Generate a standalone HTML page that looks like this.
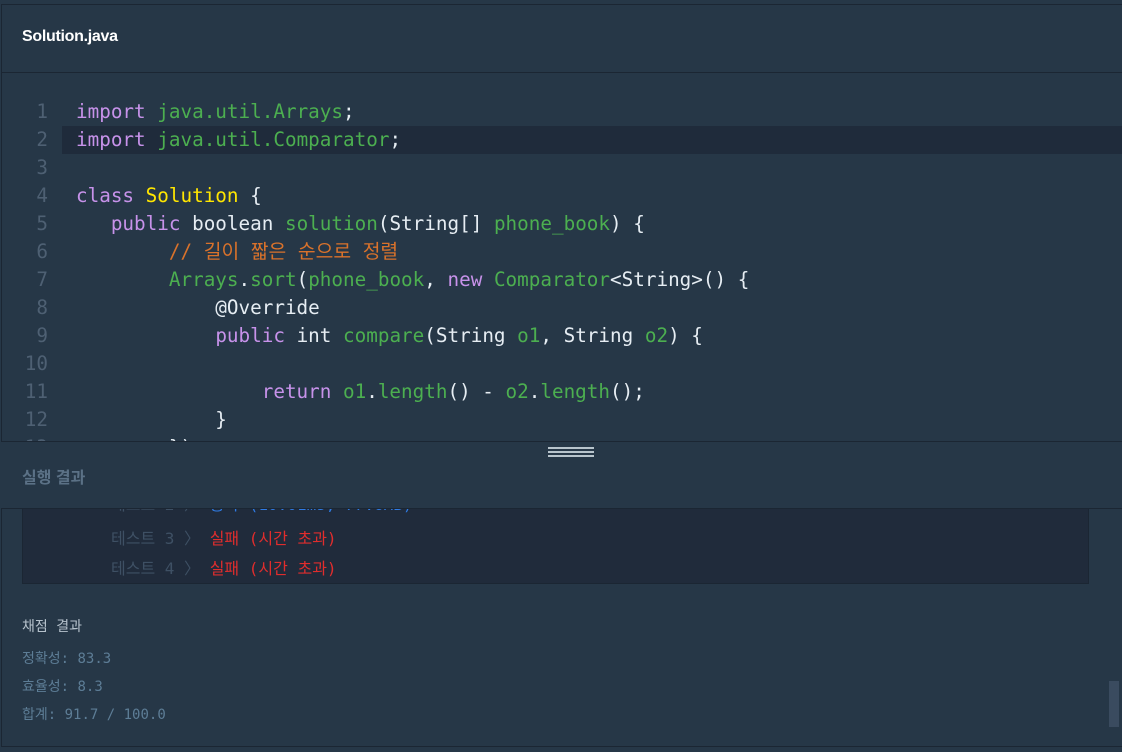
<!DOCTYPE html>
<html><head><meta charset="utf-8"><style>
*{margin:0;padding:0;box-sizing:border-box}
body{width:1122px;height:752px;background:#263747;overflow:hidden;position:relative;font-family:"Liberation Sans","Noto Sans CJK KR",sans-serif}
.frame{position:absolute;left:1px;top:4px;right:0;bottom:5px;border-left:1px solid #1b2633;border-top:1px solid #1b2633;border-bottom:1px solid #1b2633}
.title{position:absolute;left:22px;top:28px;color:#fff;font-weight:bold;font-size:16px;letter-spacing:-0.3px}
.hsep{position:absolute;left:1px;right:0;height:1px;background:#1b2633}
.code{position:absolute;left:0;top:98px;width:1122px;font-family:"DejaVu Sans Mono","Noto Sans CJK KR",monospace;font-size:19.3px}
.ln{height:28px;line-height:28px;position:relative;white-space:pre;color:#e6edf3}
.ln .n{position:absolute;left:0;width:48px;text-align:right;color:#4e6073}
.ln .t{position:absolute;left:76px}
.hl{background:#1f2b3b;margin-left:62px}
.hl .n{left:-62px}.hl .t{left:14px}
.k{color:#c792ea}.g{color:#4caf50}.y{color:#ffe600}.c{color:#d9722b}
.panel{position:absolute;left:1px;right:0;top:441px;height:68px;background:#263747;border-top:1px solid #1b2633;border-bottom:1px solid #1b2633}
.panel .h{position:absolute;left:21px;top:22px;color:#5b7186;font-weight:bold;font-size:16px}
.handle{position:absolute;left:547px;top:5px;width:46px}
.handle div{height:2px;background:#b8c4cc;margin-bottom:2px}
.box{position:absolute;left:22px;top:509px;width:1067px;height:75px;background:#202b3b;border:1px solid #1b2633;border-top:none;font-family:"DejaVu Sans Mono","Noto Sans CJK KR",monospace;font-size:16px;overflow:hidden}
.row{position:absolute;left:88px;white-space:pre}
.gr{color:#3e5064}.rd{color:#e02d2d}.bl{color:#2f7ce6}
.res{position:absolute;left:22px;font-family:"DejaVu Sans Mono","Noto Sans CJK KR",monospace;font-size:14px;white-space:pre}
.sb{position:absolute;left:1109px;top:681px;width:10px;height:46px;background:#3a4b5f}
</style></head><body>
<div class="frame"></div>
<div class="title">Solution.java</div>
<div class="hsep" style="top:72px"></div>
<div class="code">
<div class="ln"><span class="n">1</span><span class="t"><span class="k">import</span> <span class="g">java.util.Arrays</span>;</span></div>
<div class="ln hl"><span class="n">2</span><span class="t"><span class="k">import</span> <span class="g">java.util.Comparator</span>;</span></div>
<div class="ln"><span class="n">3</span><span class="t"></span></div>
<div class="ln"><span class="n">4</span><span class="t"><span class="k">class</span> <span class="y">Solution</span> {</span></div>
<div class="ln"><span class="n">5</span><span class="t">   <span class="k">public</span> boolean <span class="g">solution</span>(String[] <span class="g">phone_book</span>) {</span></div>
<div class="ln"><span class="n">6</span><span class="t">        <span class="c">// 길이 짧은 순으로 정렬</span></span></div>
<div class="ln"><span class="n">7</span><span class="t">        <span class="g">Arrays</span>.<span class="g">sort</span>(<span class="g">phone_book</span>, <span class="k">new</span> <span class="g">Comparator</span>&lt;String&gt;() {</span></div>
<div class="ln"><span class="n">8</span><span class="t">            @Override</span></div>
<div class="ln"><span class="n">9</span><span class="t">            <span class="k">public</span> int <span class="g">compare</span>(String <span class="g">o1</span>, String <span class="g">o2</span>) {</span></div>
<div class="ln"><span class="n">10</span><span class="t"></span></div>
<div class="ln"><span class="n">11</span><span class="t">                <span class="k">return</span> <span class="g">o1</span>.<span class="g">length</span>() - <span class="g">o2</span>.<span class="g">length</span>();</span></div>
<div class="ln"><span class="n">12</span><span class="t">            }</span></div>
<div class="ln"><span class="n">13</span><span class="t">        });</span></div>
</div>
<div class="box">
<div class="row" style="top:-18px"><span class="gr">테스트 2 〉 </span><span class="bl">통과 (10.01ms, 77.6MB)</span></div>
<div class="row" style="top:16px"><span class="gr">테스트 3 〉 </span><span class="rd">실패 (시간 초과)</span></div>
<div class="row" style="top:46px"><span class="gr">테스트 4 〉 </span><span class="rd">실패 (시간 초과)</span></div>
</div>
<div class="panel"><div class="handle"><div></div><div></div><div></div></div><div class="h">실행 결과</div></div>
<div class="res" style="top:616px;color:#b6c2cc">채점 결과</div>
<div class="res" style="top:648px;color:#5d7d96">정확성: 83.3</div>
<div class="res" style="top:676px;color:#5d7d96">효율성: 8.3</div>
<div class="res" style="top:704px;color:#5d7d96">합계: 91.7 / 100.0</div>
<div class="sb"></div>
</body></html>
